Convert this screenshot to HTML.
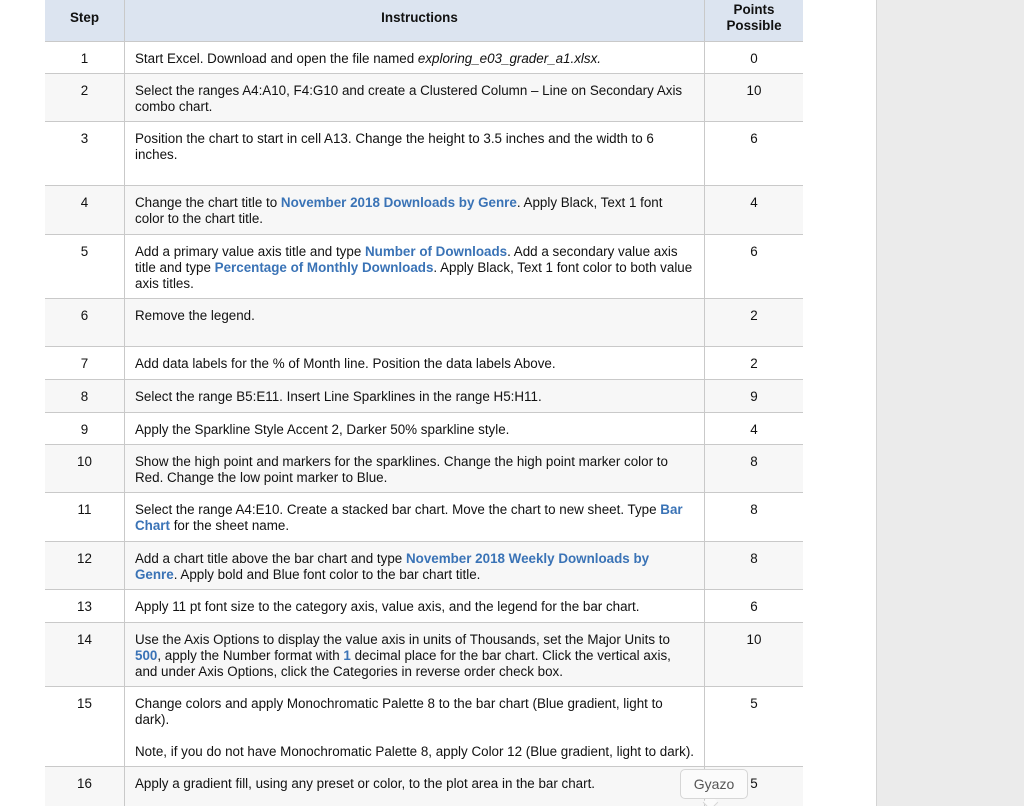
<!DOCTYPE html>
<html><head><meta charset="utf-8"><style>
html,body{margin:0;width:1024px;height:806px;overflow:hidden}
body{background:#fff;font-family:"Liberation Sans",Arial,sans-serif;font-size:13.4px;color:#111;position:relative}
.gray{position:absolute;left:876px;top:0;width:148px;height:806px;background:#ebebeb;border-left:1px solid #d4d4d4}
.r{position:absolute;left:45px;width:758px;border-bottom:1px solid #c9c9c9;box-sizing:border-box}
.r.g{background:#f7f7f7}
.r.h{background:#dce4f0;font-weight:bold}
.s,.i,.p{position:absolute;top:0;bottom:0;box-sizing:border-box;padding-top:9px;line-height:16px}
.s{left:0;width:80px;text-align:center;border-right:1px solid #c9c9c9}
.i{left:80px;width:580px;padding-left:10px;border-right:1px solid #c9c9c9;white-space:nowrap}
.p{left:660px;width:98px;text-align:center}
b{color:#3a73b6}
.h b{color:#111}
.gy{position:absolute;left:680px;top:769px;width:66px;height:28px;border:1px solid #d6d6d6;border-radius:5px;background:#fbfbfb;color:#555;font-size:14px;line-height:28px;text-align:center}
.ar{position:absolute;left:705px;top:797px;width:10px;height:10px;background:#fbfbfb;border-right:1px solid #d6d6d6;border-bottom:1px solid #d6d6d6;transform:rotate(45deg)}
</style></head><body>
<div class="gray"></div>
<div class="r h" style="top:0;height:42px"><div class="s" style="padding-top:10px">Step</div><div class="i" style="text-align:center;padding-top:10px">Instructions</div><div class="p" style="padding-top:2px">Points<br>Possible</div></div>
<div class="r" style="top:42px;height:32px"><div class="s">1</div><div class="i">Start Excel. Download and open the file named <i>exploring_e03_grader_a1.xlsx.</i></div><div class="p">0</div></div>
<div class="r g" style="top:74px;height:48px"><div class="s">2</div><div class="i">Select the ranges A4:A10, F4:G10 and create a Clustered Column – Line on Secondary Axis<br>combo chart.</div><div class="p">10</div></div>
<div class="r" style="top:122px;height:64px"><div class="s">3</div><div class="i">Position the chart to start in cell A13. Change the height to 3.5 inches and the width to 6<br>inches.</div><div class="p">6</div></div>
<div class="r g" style="top:186px;height:49px"><div class="s">4</div><div class="i">Change the chart title to <b>November 2018 Downloads by Genre</b>. Apply Black, Text 1 font<br>color to the chart title.</div><div class="p">4</div></div>
<div class="r" style="top:235px;height:64px"><div class="s">5</div><div class="i">Add a primary value axis title and type <b>Number of Downloads</b>. Add a secondary value axis<br>title and type <b>Percentage of Monthly Downloads</b>. Apply Black, Text 1 font color to both value<br>axis titles.</div><div class="p">6</div></div>
<div class="r g" style="top:299px;height:48px"><div class="s">6</div><div class="i">Remove the legend.</div><div class="p">2</div></div>
<div class="r" style="top:347px;height:33px"><div class="s">7</div><div class="i">Add data labels for the % of Month line. Position the data labels Above.</div><div class="p">2</div></div>
<div class="r g" style="top:380px;height:33px"><div class="s">8</div><div class="i">Select the range B5:E11. Insert Line Sparklines in the range H5:H11.</div><div class="p">9</div></div>
<div class="r" style="top:413px;height:32px"><div class="s">9</div><div class="i">Apply the Sparkline Style Accent 2, Darker 50% sparkline style.</div><div class="p">4</div></div>
<div class="r g" style="top:445px;height:48px"><div class="s">10</div><div class="i">Show the high point and markers for the sparklines. Change the high point marker color to<br>Red. Change the low point marker to Blue.</div><div class="p">8</div></div>
<div class="r" style="top:493px;height:49px"><div class="s">11</div><div class="i">Select the range A4:E10. Create a stacked bar chart. Move the chart to new sheet. Type <b>Bar<br>Chart</b> for the sheet name.</div><div class="p">8</div></div>
<div class="r g" style="top:542px;height:48px"><div class="s">12</div><div class="i">Add a chart title above the bar chart and type <b>November 2018 Weekly Downloads by<br>Genre</b>. Apply bold and Blue font color to the bar chart title.</div><div class="p">8</div></div>
<div class="r" style="top:590px;height:33px"><div class="s">13</div><div class="i">Apply 11 pt font size to the category axis, value axis, and the legend for the bar chart.</div><div class="p">6</div></div>
<div class="r g" style="top:623px;height:64px"><div class="s">14</div><div class="i">Use the Axis Options to display the value axis in units of Thousands, set the Major Units to<br><b>500</b>, apply the Number format with <b>1</b> decimal place for the bar chart. Click the vertical axis,<br>and under Axis Options, click the Categories in reverse order check box.</div><div class="p">10</div></div>
<div class="r" style="top:687px;height:80px"><div class="s">15</div><div class="i">Change colors and apply Monochromatic Palette 8 to the bar chart (Blue gradient, light to<br>dark).<br><div style="height:16px"></div>Note, if you do not have Monochromatic Palette 8, apply Color 12 (Blue gradient, light to dark).</div><div class="p">5</div></div>
<div class="r g" style="top:767px;height:45px"><div class="s">16</div><div class="i">Apply a gradient fill, using any preset or color, to the plot area in the bar chart.</div><div class="p">5</div></div>
<div class="ar"></div>
<div class="gy">Gyazo</div>
</body></html>
